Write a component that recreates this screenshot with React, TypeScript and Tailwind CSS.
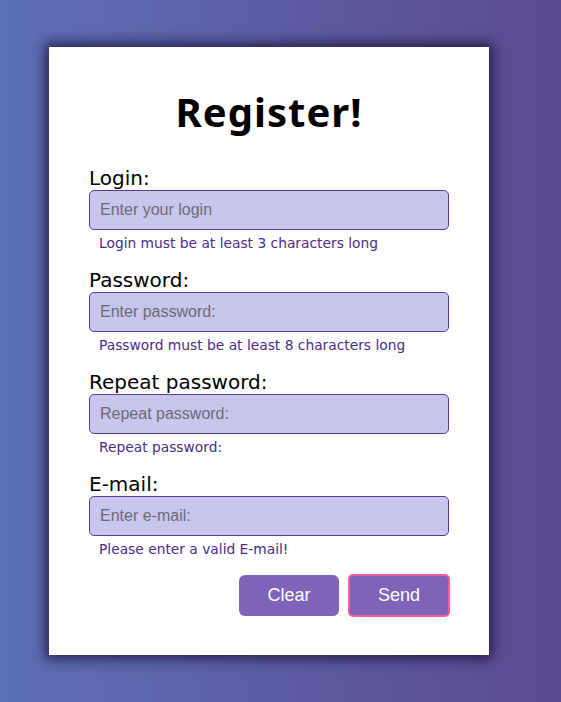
import React from 'react';

const fields = [
  { label: 'Login:', placeholder: 'Enter your login', error: 'Login must be at least 3 characters long', type: 'text' },
  { label: 'Password:', placeholder: 'Enter password:', error: 'Password must be at least 8 characters long', type: 'password' },
  { label: 'Repeat password:', placeholder: 'Repeat password:', error: 'Repeat password:', type: 'password' },
  { label: 'E-mail:', placeholder: 'Enter e-mail:', error: 'Please enter a valid E-mail!', type: 'email' },
];

const App = () => {
  return (
    <div className="w-[561px] h-[702px] overflow-hidden bg-gradient-to-r from-[#5b70b6] to-[#5c4a90] pt-[47px] pl-[49px]">
      <div className="w-[440px] h-[608px] bg-white shadow-[0_0_12px_4px_rgba(20,10,50,0.75)] px-10 pt-[41px] font-['DejaVu_Sans',sans-serif]">
        <h1 className="text-center text-[40px] leading-[48px] font-bold tracking-[1px] text-black font-['Noto_Sans',sans-serif]">
          Register!
        </h1>
        <form className="mt-[30px] flex flex-col">
          {fields.map((f) => (
            <div key={f.label} className="mb-4 flex flex-col">
              <label className="text-[20px] leading-[24px] text-black">{f.label}</label>
              <input
                type={f.type}
                placeholder={f.placeholder}
                className="h-10 w-[360px] rounded-[5px] border border-[#5b3a8c] bg-[#c8c5ee] px-[10px] text-[16px] font-['Liberation_Sans',Arial,sans-serif] text-[#333] placeholder:text-[#6b6b73] outline-none"
              />
              <span className="mt-[5px] pl-[10px] text-[13.8px] leading-[17px] text-[#4a2c8a]">{f.error}</span>
            </div>
          ))}
          <div className="flex justify-end gap-[10px] pt-px">
            <button
              type="reset"
              className="h-[41px] w-[100px] rounded-[6px] bg-[#8062b8] text-[18px] text-white font-['Liberation_Sans',Arial,sans-serif]"
            >
              Clear
            </button>
            <button
              type="submit"
              className="h-[41px] w-[100px] rounded-[4px] bg-[#8062b8] text-[18px] text-white font-['Liberation_Sans',Arial,sans-serif] outline-2 -outline-offset-1 outline-[#f0609a]"
            >
              Send
            </button>
          </div>
        </form>
      </div>
    </div>
  );
};

export default App;
